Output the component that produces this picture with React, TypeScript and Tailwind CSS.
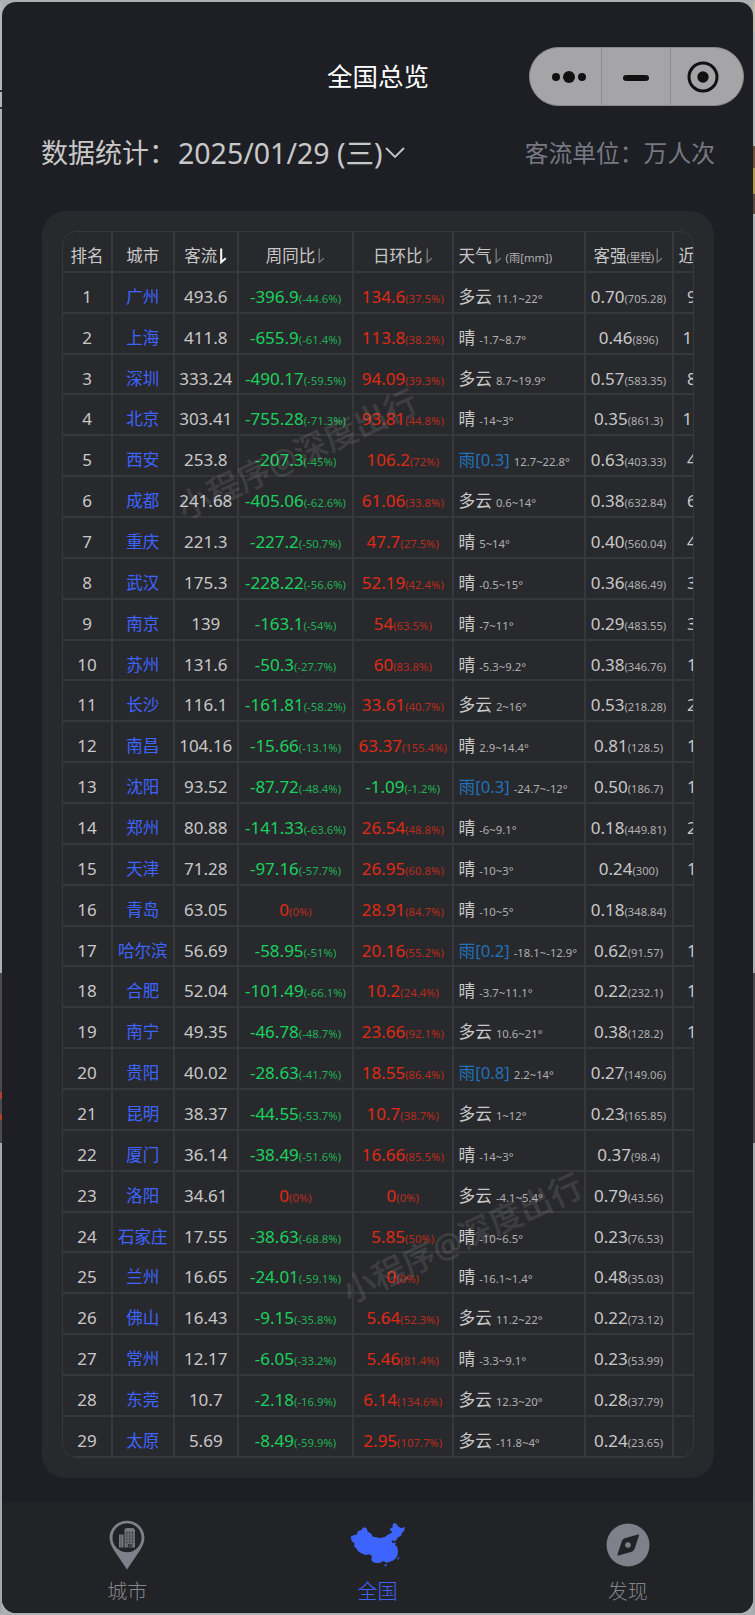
import React, { useState } from 'react'
import clsx from 'clsx'

type Change = [string, string]

interface CityRow {
    city: string;
    flow: string;
    week: Change;
    day: Change;
    weather: string;
    temp: string;
    strength: Change;
    recent: string;
}

const parse = (line: string): CityRow => {
    const [city, flow, w, wp, d, dp, weather, temp, s, km, recent = ''] = line.split('|')
    return { city, flow, week: [w, wp], day: [d, dp], weather, temp, strength: [s, km], recent }
}

const rows: CityRow[] = [
    '广州|493.6|-396.9|-44.6%|134.6|37.5%|多云|11.1~22°|0.70|705.28|9',
    '上海|411.8|-655.9|-61.4%|113.8|38.2%|晴|-1.7~8.7°|0.46|896|1',
    '深圳|333.24|-490.17|-59.5%|94.09|39.3%|多云|8.7~19.9°|0.57|583.35|8',
    '北京|303.41|-755.28|-71.3%|93.81|44.8%|晴|-14~3°|0.35|861.3|1',
    '西安|253.8|-207.3|-45%|106.2|72%|雨[0.3]|12.7~22.8°|0.63|403.33|4',
    '成都|241.68|-405.06|-62.6%|61.06|33.8%|多云|0.6~14°|0.38|632.84|6',
    '重庆|221.3|-227.2|-50.7%|47.7|27.5%|晴|5~14°|0.40|560.04|4',
    '武汉|175.3|-228.22|-56.6%|52.19|42.4%|晴|-0.5~15°|0.36|486.49|3',
    '南京|139|-163.1|-54%|54|63.5%|晴|-7~11°|0.29|483.55|3',
    '苏州|131.6|-50.3|-27.7%|60|83.8%|晴|-5.3~9.2°|0.38|346.76|1',
    '长沙|116.1|-161.81|-58.2%|33.61|40.7%|多云|2~16°|0.53|218.28|2',
    '南昌|104.16|-15.66|-13.1%|63.37|155.4%|晴|2.9~14.4°|0.81|128.5|1',
    '沈阳|93.52|-87.72|-48.4%|-1.09|-1.2%|雨[0.3]|-24.7~-12°|0.50|186.7|1',
    '郑州|80.88|-141.33|-63.6%|26.54|48.8%|晴|-6~9.1°|0.18|449.81|2',
    '天津|71.28|-97.16|-57.7%|26.95|60.8%|晴|-10~3°|0.24|300|1',
    '青岛|63.05|0|0%|28.91|84.7%|晴|-10~5°|0.18|348.84',
    '哈尔滨|56.69|-58.95|-51%|20.16|55.2%|雨[0.2]|-18.1~-12.9°|0.62|91.57|1',
    '合肥|52.04|-101.49|-66.1%|10.2|24.4%|晴|-3.7~11.1°|0.22|232.1|1',
    '南宁|49.35|-46.78|-48.7%|23.66|92.1%|多云|10.6~21°|0.38|128.2|1',
    '贵阳|40.02|-28.63|-41.7%|18.55|86.4%|雨[0.8]|2.2~14°|0.27|149.06',
    '昆明|38.37|-44.55|-53.7%|10.7|38.7%|多云|1~12°|0.23|165.85',
    '厦门|36.14|-38.49|-51.6%|16.66|85.5%|晴|-14~3°|0.37|98.4',
    '洛阳|34.61|0|0%|0|0%|多云|-4.1~5.4°|0.79|43.56',
    '石家庄|17.55|-38.63|-68.8%|5.85|50%|晴|-10~6.5°|0.23|76.53',
    '兰州|16.65|-24.01|-59.1%|0|0%|晴|-16.1~1.4°|0.48|35.03',
    '佛山|16.43|-9.15|-35.8%|5.64|52.3%|多云|11.2~22°|0.22|73.12',
    '常州|12.17|-6.05|-33.2%|5.46|81.4%|晴|-3.3~9.1°|0.23|53.99',
    '东莞|10.7|-2.18|-16.9%|6.14|134.6%|多云|12.3~20°|0.28|37.79',
    '太原|5.69|-8.49|-59.9%|2.95|107.7%|多云|-11.8~4°|0.24|23.65',
].map(parse)

const GRID = 'grid grid-cols-[50px_61.5px_64.5px_115px_99.5px_132px_88px_60px]'
const CELL = 'border-r-2 border-b-2 border-[#37383a] pt-[10px] leading-[28px] whitespace-nowrap text-center overflow-hidden'

const SortArrow = ({ active = false }: { active?: boolean }) => (
    <svg viewBox="0 0 7 16" className={clsx('inline-block w-[7px] h-4 ml-[3px] align-[-2px]', active ? 'text-white' : 'text-[#77787c]')}>
        <path d="M1.2 0.5V14.2L5.8 10.2" fill="none" stroke="currentColor" strokeWidth={active ? 2 : 1.4} />
    </svg>
)

const ChangeCell = ({ value: [num, pct] }: { value: Change }) => {
    const down = num.startsWith('-')
    return (
        <div className={clsx(CELL, down ? 'text-[#1bd15e]' : 'text-[#e02a14]')}>
            {num}
            <span className={clsx('text-[11.3px]', down ? 'text-[#20b055]' : 'text-[#b82c1c]')}>({pct})</span>
        </div>
    )
}

const Watermark = ({ className }: { className: string }) => (
    <div className={clsx('absolute -translate-x-1/2 -translate-y-1/2 -rotate-[25deg] whitespace-nowrap text-[33px] font-medium leading-none text-white/10 pointer-events-none', className)}>
        小程序@深度出行
    </div>
)

const CapsuleMenu = () => (
    <div className="flex h-[59px] w-[215px] rounded-full bg-[#a5a5a7] border border-[#8b8b8e] overflow-hidden">
        <div className="w-[72px] flex items-center justify-center pl-[6px] gap-[3px] border-r border-[#8d8d90]">
            <i className="size-2 rounded-full bg-[#111]" />
            <i className="size-3 rounded-full bg-[#111]" />
            <i className="size-2 rounded-full bg-[#111]" />
        </div>
        <div className="w-[69px] flex items-center justify-center border-r border-[#8d8d90]">
            <i className="w-[26px] h-[6px] mt-[2px] rounded-full bg-[#111]" />
        </div>
        <div className="flex-1 flex items-center pl-[15.5px]">
            <svg viewBox="0 0 32 32" className="size-8">
                <circle cx="16" cy="16" r="14" fill="none" stroke="#111" strokeWidth="3" />
                <circle cx="16" cy="16" r="5.7" fill="#111" />
            </svg>
        </div>
    </div>
)

const CityIcon = () => (
    <svg viewBox="0 0 36 50" className="w-9 h-[50px]">
        <path fillRule="evenodd" fill="#80808a" d="M18 .7C8 .7.6 8.4.6 18c0 4.6 2 8.3 4.4 12.3L18 49.5l13-19.2c2.4-4 4.4-7.7 4.4-12.3C35.4 8.4 28 .7 18 .7ZM18 3.2a14.5 14.5 0 1 1 0 29 14.5 14.5 0 0 1 0-29Z" />
        <path fill="#77777f" d="M10 14.5h4.5V27.5H10zM15.5 10.5V9l2-1h6.5l2 1.5V27.5H15.5z" />
        <path stroke="#303138" strokeWidth=".5" d="M12 15v12M17.8 11v16M20.6 11v16M23.4 11v16M15.5 13h10.5M15.5 16h10.5M15.5 19h10.5M15.5 22h10.5" />
        <path fill="#303138" d="M19 24h1.4v3.5H19zM21.2 24h1.4v3.5h-1.4z" />
    </svg>
)

const ChinaIcon = () => (
    <svg viewBox="16 24 168 138" className="w-14 h-[46px] ml-[2px]">
        <g fill="#3e64ff">
            <path d="M18 68L28 63L36 62L38 55L42 50L50 49L53 43L60 40L66 43L68 50L72 55L80 59L84 68L95 70L106 72L120 69L130 62L139 58L143 52L136 50L137 43L144 40L144 32L148 27L155 29L160 37L170 43L180 39L179 50L172 56L169 65L160 70L155 78L148 84L147 78L141 82L144 87L155 86L151 92L158 100L160 112L158 126L152 134L143 141L132 144L126 147L118 142L108 143L108 147L93 147L85 144L80 138L82 126L74 121L62 123L50 118L40 112L36 104L29 98L29 88L21 81Z" />
            <path d="M161 129L164 130L160 139L158 134ZM119 152L126 150L125 156L121 158Z" />
        </g>
    </svg>
)

const CompassIcon = () => (
    <svg viewBox="0 0 44 44" className="size-11 ml-px">
        <circle cx="22" cy="22" r="21.5" fill="#80808a" />
        <path d="M32.3 12.2L28 25.3Q27.3 27.2 25.5 28L12.2 31.8L16.4 18.8Q17 16.8 19 16Z" fill="#222326" stroke="#222326" strokeWidth="1.5" strokeLinejoin="round" />
        <circle cx="22" cy="22" r="2.8" fill="#80808a" />
    </svg>
)

const App: React.FC = () => {
    const [tab, setTab] = useState('全国')

    const tabs = [
        { name: '城市', icon: <CityIcon /> },
        { name: '全国', icon: <ChinaIcon /> },
        { name: '发现', icon: <CompassIcon /> },
    ]

    return (
        <div className="flex justify-between w-[755px] h-[1615px] py-[2px] bg-[#adafb0] font-['Noto_Sans','Noto_Sans_CJK_SC',sans-serif]">
            <div className="w-[2px] bg-[linear-gradient(#b4b7b8_0_88px,#333_88px_90px,#b4b7b8_90px_105px,#333_105px_107px,#adafb0_107px_971px,#4a4a4a_971px_1090px,#b04030_1090px_1097px,#4a4a4a_1097px_1112px,#b04030_1112px_1118px,#4a4a4a_1118px_1141px,#a5a7a8_1141px)]" />
            <div className="flex flex-col w-[751px] h-[1611px] rounded-[14px] bg-[#1e1f24] overflow-hidden text-[#c8c8c9]">
                {/* Title bar */}
                <div className="flex h-[104px] shrink-0 items-end justify-end pr-[9px]">
                    <h1 className="w-[202px] mb-[11px] text-[25.5px] leading-[38px] text-white">全国总览</h1>
                    <CapsuleMenu />
                </div>

                <div className="flex h-[105px] shrink-0 items-start justify-between pl-[39px] pr-[38px] pt-[27px]">
                    <div className="flex items-center text-[27px] leading-[40px] whitespace-nowrap">
                        数据统计：<span className="text-[28.5px] ml-[2px]">2025/01/29 (三)</span>
                        <svg viewBox="0 0 20 12" className="w-5 h-3 ml-[2px]">
                            <path d="M1 1L10 10L19 1" fill="none" stroke="currentColor" strokeWidth="1.8" />
                        </svg>
                    </div>
                    <div className="text-[23.8px] leading-[40px] text-[#777883]">客流单位：万人次</div>
                </div>

                {/* City table */}
                <div className="relative ml-[40px] w-[672px] h-[1267px] shrink-0 rounded-[24px] bg-[#28292c] p-5">
                    <div className="w-[632px] h-[1227px] rounded-[14px] border border-[#37383a] overflow-hidden text-[17px]">
                        <div className={clsx(GRID, 'h-[40.8px] text-[16.5px]')}>
                            <div className={CELL}>排名</div>
                            <div className={CELL}>城市</div>
                            <div className={CELL}>客流<SortArrow active /></div>
                            <div className={CELL}>周同比<SortArrow /></div>
                            <div className={CELL}>日环比<SortArrow /></div>
                            <div className={clsx(CELL, 'text-left! pl-[5px]')}>
                                天气<SortArrow /><span className="text-[11.3px] text-[#b0b0b1] ml-[4px]">(雨[mm])</span>
                            </div>
                            <div className={CELL}>
                                客强<span className="text-[11.3px] tracking-[-0.6px] text-[#b0b0b1]">(里程)</span><SortArrow />
                            </div>
                            <div className={clsx(CELL, 'text-left! pl-[5px]')}>近</div>
                        </div>
                        {rows.map((row, index) => (
                            <div key={row.city} className={clsx(GRID, 'h-[40.86px]')}>
                                <div className={CELL}>{index + 1}</div>
                                <div className={clsx(CELL, 'text-[16.5px] text-[#3e64ff]')}>{row.city}</div>
                                <div className={CELL}>{row.flow}</div>
                                <ChangeCell value={row.week} />
                                <ChangeCell value={row.day} />
                                <div className={clsx(CELL, 'text-left! pl-[5px] text-[16.7px]')}>
                                    <span className={row.weather.startsWith('雨') ? 'text-[#2271b8]' : ''}>{row.weather}</span>
                                    <span className="text-[11.3px] text-[#b0b0b1] ml-[4px]">{row.temp}</span>
                                </div>
                                <div className={CELL}>
                                    {row.strength[0]}
                                    <span className="text-[11.2px] text-[#b0b0b1]">({row.strength[1]})</span>
                                </div>
                                <div className={clsx(CELL, 'text-left!', row.city === '上海' || row.city === '北京' ? 'pl-[9px]' : 'pl-[13.5px]')}>{row.recent}</div>
                            </div>
                        ))}
                    </div>
                    <Watermark className="left-[255px] top-[243px]" />
                    <Watermark className="left-[420px] top-[1027px]" />
                </div>

                {/* Tab bar */}
                <div className="mt-auto flex h-[111px] shrink-0 bg-[#222326]">
                    {tabs.map((t) => (
                        <button key={t.name} className="flex-1 flex flex-col items-center pt-[17px]" onClick={() => setTab(t.name)}>
                            <span className="h-[52px] flex items-center">{t.icon}</span>
                            <span className={clsx('text-[20px] leading-[41px] font-light', tab === t.name ? 'text-[#3e64ff]' : 'text-[#85858c]')}>{t.name}</span>
                        </button>
                    ))}
                </div>
            </div>
            <div className="w-[2px] bg-[linear-gradient(#c0bda8_0_30px,#b4b7b8_30px_144px,#705040_144px_166px,#b09848_166px_192px,#5c4a40_192px_212px,#adafb0_212px_971px,#4a4a4a_971px_1141px,#a5a7a8_1141px)]" />
        </div>
    )
}

export default App
